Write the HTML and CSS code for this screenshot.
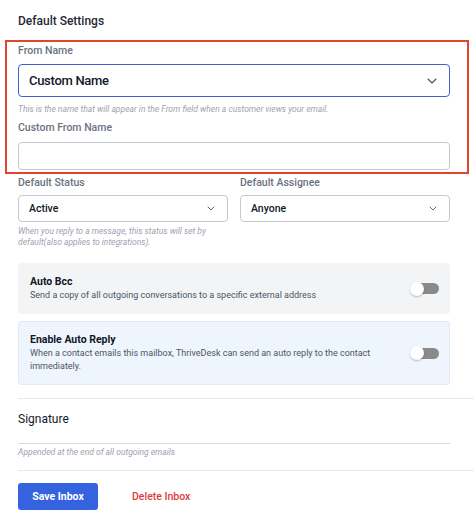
FILE: index.html
```html
<!DOCTYPE html>
<html lang="en">

<head>
    <meta charset="UTF-8">
    <meta name="viewport" content="width=device-width, initial-scale=1.0">
    <title>Inbox Settings</title>
    <link rel="stylesheet" href="styles.css">
</head>

<body>
    <div class="settings">
        <h2 class="section-title">Default Settings</h2>

        <!-- Highlighted from-name block -->
        <div class="highlight">
            <label class="field-label">From Name</label>
            <div class="select select-large select-focus">
                <span>Custom Name</span>
                <svg class="chevron" width="10" height="6" viewBox="0 0 10 6"><path d="M1 1l4 4 4-4" fill="none" stroke="#555" stroke-width="1.1" stroke-linecap="round" stroke-linejoin="round"/></svg>
            </div>
            <p class="hint hint-first">This is the name that will appear in the From field when a customer views your email.</p>
            <label class="field-label label-spaced">Custom From Name</label>
            <input type="text" class="text-input">
        </div>

        <!-- Status / assignee -->
        <div class="field-row">
            <div class="field-col">
                <label class="field-label">Default Status</label>
                <div class="select">
                    <span>Active</span>
                    <svg class="chevron-small" width="8" height="5" viewBox="0 0 8 5"><path d="M1 1l3 3 3-3" fill="none" stroke="#666" stroke-width="1" stroke-linecap="round" stroke-linejoin="round"/></svg>
                </div>
                <p class="hint hint-status">When you reply to a message, this status will set by default(also applies to integrations).</p>
            </div>
            <div class="field-col">
                <label class="field-label">Default Assignee</label>
                <div class="select">
                    <span>Anyone</span>
                    <svg class="chevron-small" width="8" height="5" viewBox="0 0 8 5"><path d="M1 1l3 3 3-3" fill="none" stroke="#666" stroke-width="1" stroke-linecap="round" stroke-linejoin="round"/></svg>
                </div>
            </div>
        </div>

        <!-- Toggles -->
        <div class="option-card">
            <div class="option-text">
                <div class="option-title">Auto Bcc</div>
                <div class="option-desc">Send a copy of all outgoing conversations to a specific external address</div>
            </div>
            <span class="toggle"></span>
        </div>

        <div class="option-card option-blue">
            <div class="option-text">
                <div class="option-title">Enable Auto Reply</div>
                <div class="option-desc">When a contact emails this mailbox, ThriveDesk can send an auto reply to the contact immediately.</div>
            </div>
            <span class="toggle"></span>
        </div>

        <hr class="divider divider-top">

        <!-- Signature -->
        <h3 class="signature-title">Signature</h3>
        <div class="signature-editor"></div>
        <p class="hint hint-signature">Appended at the end of all outgoing emails</p>

        <hr class="divider divider-bottom">

        <div class="button-group">
            <button type="button" class="save-button">Save Inbox</button>
            <button type="button" class="delete-button">Delete Inbox</button>
        </div>
    </div>
</body>

</html>
```

FILE: styles.css
```css
body {
    font-family: Roboto, "Liberation Sans", sans-serif;
    margin: 0;
    padding: 0;
    background-color: white;
    color: #1f2937;
}

.settings {
    padding: 12px 0 0 18px;
}

.section-title {
    font-size: 12px;
    font-weight: 500;
    line-height: 18px;
    margin: 0 0 10px;
    color: #1f2937;
}

.highlight {
    border: 2px solid #e2452f;
    margin: 0 5px 0 -13px;
    padding: 2px 17px 2px 11px;
}

.field-label {
    display: block;
    font-size: 10.5px;
    font-weight: 500;
    line-height: 14px;
    color: #6b7280;
}

.label-spaced {
    margin-top: 6px;
}

.select {
    display: flex;
    align-items: center;
    justify-content: space-between;
    box-sizing: border-box;
    height: 27px;
    margin-top: 5px;
    padding: 0 12px 0 10px;
    border: 1px solid #c6c9cf;
    border-radius: 4px;
    font-size: 10.5px;
    font-weight: 500;
    color: #111827;
}

.select-large {
    height: 33px;
    margin-top: 6px;
    font-size: 13px;
    letter-spacing: -0.3px;
}

.select-focus {
    border: 1.5px solid #3d5fd8;
}

.hint {
    margin: 0;
    font-size: 8.5px;
    font-style: italic;
    color: #9ca3af;
    line-height: 12px;
}

.hint-first {
    margin-top: 6px;
}

.text-input {
    display: block;
    box-sizing: border-box;
    width: 100%;
    height: 28px;
    margin-top: 7px;
    border: 1px solid #c6c9cf;
    border-radius: 4px;
    outline: none;
}

.field-row {
    display: flex;
    gap: 12px;
    width: 432px;
    margin-top: 2px;
}

.field-col {
    flex: 1;
}

.hint-status {
    margin-top: 4px;
    line-height: 11px;
}

.option-card {
    display: flex;
    align-items: center;
    width: 432px;
    box-sizing: border-box;
    margin-top: 15px;
    padding: 11px 10px 11px 11px;
    border: 1px solid #f3f4f6;
    border-radius: 3px;
    background-color: #f3f4f6;
}

.option-card + .option-card {
    margin-top: 7px;
}

.option-blue {
    background-color: #eff5fd;
    border-color: #e2eaf6;
}

.option-text {
    flex: 1;
    padding-right: 30px;
}

.option-title {
    font-size: 10.5px;
    font-weight: 700;
    line-height: 14px;
    color: #111827;
}

.option-desc {
    font-size: 9px;
    line-height: 13px;
    color: #4b5563;
}

.toggle {
    position: relative;
    width: 28px;
    height: 11px;
    border-radius: 6px;
    background-color: #8a8a8a;
}

.toggle::before {
    content: "";
    position: absolute;
    left: -1px;
    top: -1.5px;
    width: 14px;
    height: 14px;
    border-radius: 50%;
    background-color: white;
    box-shadow: 0 1px 2px rgba(0, 0, 0, 0.25);
}

.divider {
    border: none;
    border-top: 1.5px solid #e8e9ec;
    margin: 0;
}

.divider-top {
    margin-top: 13px;
}

.signature-title {
    font-size: 12px;
    font-weight: 400;
    line-height: 16px;
    margin: 12px 0 0;
    color: #111827;
}

.signature-editor {
    width: 432px;
    height: 16px;
    border-bottom: 1px solid #d8dadf;
}

.hint-signature {
    margin-top: 2px;
}

.divider-bottom {
    margin-top: 12px;
}

.button-group {
    display: flex;
    align-items: center;
    gap: 20px;
    margin-top: 12px;
}

button {
    font-family: Roboto, "Liberation Sans", sans-serif;
    font-size: 10.5px;
    border: none;
    cursor: pointer;
}

.save-button {
    height: 27px;
    width: 80px;
    border-radius: 3px;
    background-color: #3563e0;
    color: white;
    font-weight: 700;
}

.delete-button {
    padding: 0 14px;
    background: none;
    color: #dc3b3b;
    font-weight: 500;
}
```
